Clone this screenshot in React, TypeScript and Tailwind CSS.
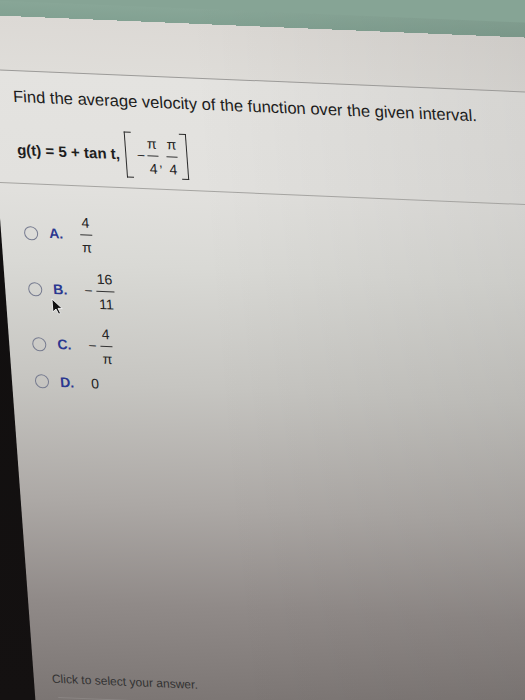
import React from "react";

type Frac = { top: string; bottom: string; neg?: boolean };

const options: { label: string; value: Frac | string }[] = [
  { label: "A.", value: { top: "4", bottom: "π" } },
  { label: "B.", value: { top: "16", bottom: "11", neg: true } },
  { label: "C.", value: { top: "4", bottom: "π", neg: true } },
  { label: "D.", value: "0" },
];

function Fraction({ top, bottom }: { top: string; bottom: string }) {
  return (
    <div className="flex flex-col items-center text-[14px] leading-5 text-[#222]">
      <span className="px-[1px]">{top}</span>
      <span className="my-[2px] h-px w-full bg-[#333]" />
      <span className="px-[1px]">{bottom}</span>
    </div>
  );
}

function SmallFraction() {
  return (
    <div className="flex flex-col items-center text-[14px] leading-4 text-[#222]">
      <span>π</span>
      <span className="my-[4px] h-px w-[11px] bg-[#333]" />
      <span>4</span>
    </div>
  );
}

function Cursor() {
  return (
    <svg
      className="absolute left-[45px] top-[296px]"
      width="12"
      height="17"
      viewBox="0 0 12 17"
    >
      <path
        d="M1 1 L1 14 L4.3 11 L6.6 16 L8.6 15.1 L6.4 10.2 L10.6 10.2 Z"
        fill="#111"
        stroke="#f4f4f4"
        strokeWidth="0.9"
        strokeLinejoin="round"
      />
    </svg>
  );
}

export default function App() {
  const rowGaps = ["mt-[26px]", "mt-[11px]", "mt-[10px]", "mt-[5px]"];

  return (
    <div className="h-[700px] w-[525px] overflow-hidden bg-[linear-gradient(180deg,#86a495_0px,#86a495_40px,#100e0e_40px,#141111_700px)] font-['Liberation_Sans',Arial,sans-serif]">
      <div className="relative -ml-[16px] flex h-[760px] w-[570px] origin-top-left skew-x-[4.2deg] skew-y-[2.4deg] flex-col bg-[linear-gradient(90deg,rgba(0,0,0,0)_35%,rgba(0,0,0,0.07)_100%),linear-gradient(180deg,#88a697_0px,#82a192_15px,#dcd9d5_15px,#dfddd9_70px,#e4e3e0_70px,#e2e1de_180px,#d9d9d5_260px,#c6c5c1_380px,#aca8a5_500px,#908a88_600px,#7b7573_700px,#6f6a68_760px)]">
        {/* header strip */}
        <div className="h-[70px] shrink-0 border-b border-[#9c9b99]" />

        {/* question */}
        <div className="shrink-0 border-b border-[#a5a4a1] pb-[10px] pl-[22px] pt-[15px]">
          <p className="text-[16.5px] leading-5 text-[#1c1c1c]">
            Find the average velocity of the function over the given interval.
          </p>
          <div className="mt-[21px] flex h-[46px] items-center">
            <span className="text-[15px] font-bold text-[#1e1e1e]">
              g(t) = 5 + tan t,
            </span>
            <div className="ml-[5px] flex h-[46px] items-center">
              <span className="h-full w-[7px] border-y-[1.5px] border-l-[1.5px] border-[#2a2a2a]" />
              <span className="ml-[5px] text-[14px] text-[#222]">−</span>
              <div className="ml-[2px]">
                <SmallFraction />
              </div>
              <span className="mt-[14px] text-[13px] text-[#222]">,</span>
              <div className="ml-[5px]">
                <SmallFraction />
              </div>
              <span className="ml-[3px] h-full w-[7px] border-y-[1.5px] border-r-[1.5px] border-[#2a2a2a]" />
            </div>
          </div>
        </div>

        {/* options */}
        <div className="relative flex flex-1 flex-col pl-[23px]">
          {options.map((opt, i) => (
            <div
              key={opt.label}
              className={`flex items-center ${rowGaps[i]} ${
                typeof opt.value === "string" ? "h-5" : "h-[45px]"
              }`}
            >
              <span className="h-[14px] w-[14px] shrink-0 rounded-full border-[1.5px] border-[#777c90]" />
              <span className="ml-[11px] w-[31px] text-[14px] font-bold text-[#2b3890]">
                {opt.label}
              </span>
              {typeof opt.value === "string" ? (
                <span className="text-[14px] text-[#222]">{opt.value}</span>
              ) : (
                <div className="flex items-center">
                  {opt.value.neg && (
                    <span className="mr-[4px] text-[14px] text-[#222]">−</span>
                  )}
                  <Fraction top={opt.value.top} bottom={opt.value.bottom} />
                </div>
              )}
            </div>
          ))}

          <div className="mt-auto border-b border-[#8a8583] pb-[7px]">
            <span className="-ml-[5px] text-[12px] leading-4 text-[#333]">
              Click to select your answer.
            </span>
          </div>
          <div className="h-[63px]" />
        </div>

        <Cursor />
      </div>
    </div>
  );
}
